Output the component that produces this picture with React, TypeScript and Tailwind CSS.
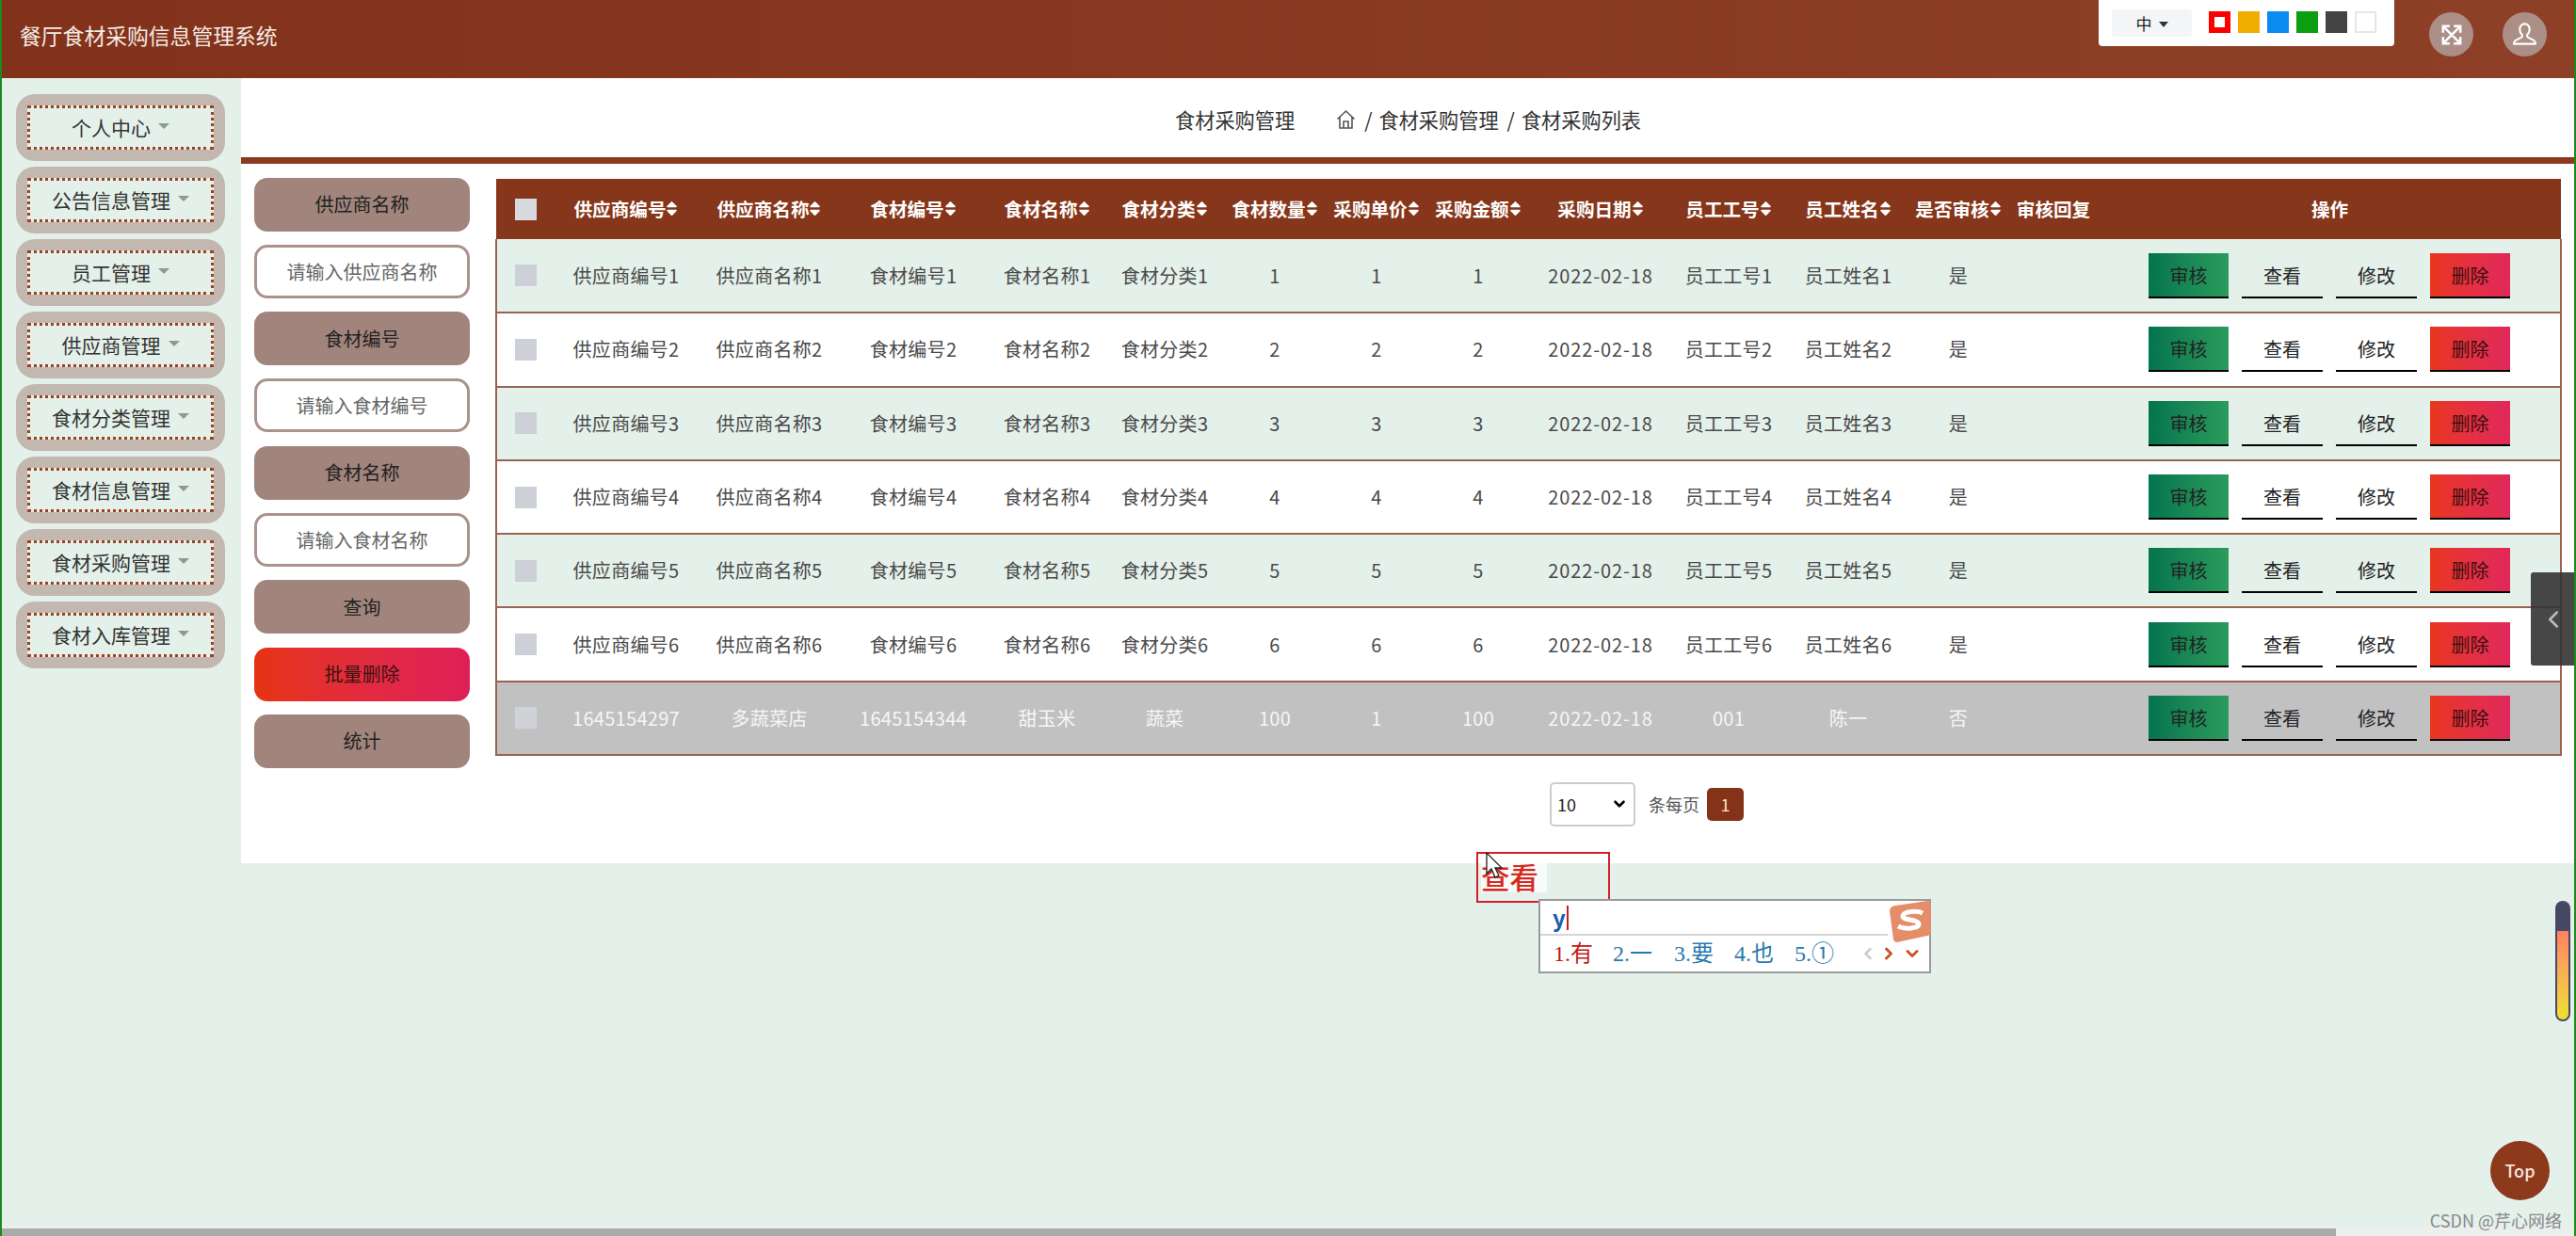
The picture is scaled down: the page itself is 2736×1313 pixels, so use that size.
import React from 'react'
import { ChevronDown, ChevronLeft, ChevronRight } from 'lucide-react'
import { FaSort } from 'react-icons/fa'

const sideMenu = ['个人中心', '公告信息管理', '员工管理', '供应商管理', '食材分类管理', '食材信息管理', '食材采购管理', '食材入库管理']

const columns = [
  { title: '供应商编号', w: 'w-[152px]', sort: true },
  { title: '供应商名称', w: 'w-[152px]', sort: true },
  { title: '食材编号', w: 'w-[154px]', sort: true },
  { title: '食材名称', w: 'w-[130px]', sort: true },
  { title: '食材分类', w: 'w-[120px]', sort: true },
  { title: '食材数量', w: 'w-[114px]', sort: true },
  { title: '采购单价', w: 'w-[102px]', sort: true },
  { title: '采购金额', w: 'w-[114px]', sort: true },
  { title: '采购日期', w: 'w-[146px]', sort: true },
  { title: '员工工号', w: 'w-[126px]', sort: true },
  { title: '员工姓名', w: 'w-[128px]', sort: true },
  { title: '是否审核', w: 'w-[106px]', sort: true },
  { title: '审核回复', w: 'w-[96px]', sort: false },
]

const demoRows = [1, 2, 3, 4, 5, 6].map((n) => [
  `供应商编号${n}`, `供应商名称${n}`, `食材编号${n}`, `食材名称${n}`, `食材分类${n}`,
  `${n}`, `${n}`, `${n}`, '2022-02-18', `员工工号${n}`, `员工姓名${n}`, '是', '',
])
const lastRow = ['1645154297', '多蔬菜店', '1645154344', '甜玉米', '蔬菜', '100', '1', '100', '2022-02-18', '001', '陈一', '否', '']

const SearchLabel = ({ text }: { text: string }) => (
  <div className="flex h-[57px] items-center justify-center rounded-[14px] bg-[#a1847c] text-[20px] text-[#222]">{text}</div>
)

const SearchInput = ({ text }: { text: string }) => (
  <input
    placeholder={text}
    className="h-[57px] w-full rounded-[14px] border-[3px] border-[#ab928c] bg-white text-center text-[20px] outline-none placeholder:text-[#666]"
  />
)

const RowActions = () => (
  <div className="flex items-center justify-center gap-[14px] text-[20px] text-[#222]">
    <button className="h-[48px] w-[85px] border-b-2 border-black bg-gradient-to-r from-[#03744e] to-[#2a9c5c] pt-[2px]">审核</button>
    <button className="h-[48px] w-[86px] border-b-2 border-black pt-[2px]">查看</button>
    <button className="h-[48px] w-[86px] border-b-2 border-black pt-[2px]">修改</button>
    <button className="h-[48px] w-[85px] border-b-2 border-black bg-gradient-to-r from-[#e8361a] to-[#e1285a] pt-[2px] text-[#3a0f0f]">删除</button>
  </div>
)

const App: React.FC = () => {
  return (
    <div className="relative flex h-screen flex-col overflow-hidden border-x-2 border-[#1c8a1c] bg-[#e4f1ea] font-['Noto_Sans_CJK_SC','Liberation_Sans',sans-serif]">
      {/* header */}
      <header className="flex h-[83px] shrink-0 items-center bg-gradient-to-r from-[#82321a] to-[#8e4027] pl-[19px] pr-[29px]">
        <span className="-mt-[7px] text-[22.8px] text-[#f3ebe4]">餐厅食材采购信息管理系统</span>
        <div className="ml-auto flex h-full items-start">
          <div className="flex h-[49px] w-[314px] items-start gap-[8px] rounded-b bg-white pl-[14px] pt-[10px]">
            <div className="mr-[10px] flex h-[29px] w-[85px] items-center justify-center gap-[7px] rounded bg-[#f4f5f6] text-[17px] text-[#222]">
              中
              <span className="mt-[2px] border-x-[5px] border-t-[6px] border-x-transparent border-t-[#333]" />
            </div>
            <span className="mt-[2px] h-[23px] w-[23px] border-[6px] border-[#fb0000] bg-white" />
            <span className="mt-[2px] h-[23px] w-[23px] bg-[#f0ad00]" />
            <span className="mt-[2px] h-[23px] w-[23px] bg-[#0a8cf0]" />
            <span className="mt-[2px] h-[23px] w-[23px] bg-[#0a9e10]" />
            <span className="mt-[2px] h-[23px] w-[23px] bg-[#444]" />
            <span className="mt-[2px] h-[23px] w-[23px] border-2 border-[#e6e6e6] bg-white" />
          </div>
          <div className="ml-[37px] mt-[13px] flex h-[47px] w-[47px] items-center justify-center rounded-full bg-[#ab8f87]">
            <svg width="26" height="26" viewBox="0 0 24 24" fill="none" stroke="white" strokeWidth="2.300">
              <path d="M4 4 20 20M20 4 4 20M3.500 10V3.500H10M14 3.500h6.500V10M20.500 14v6.500H14M10 20.500H3.500V14" />
            </svg>
          </div>
          <div className="ml-[31px] mt-[13px] flex h-[47px] w-[47px] items-center justify-center rounded-full bg-[#ab8f87]">
            <svg width="27" height="27" viewBox="0 0 28 28" fill="none" stroke="white" strokeWidth="2.200" strokeLinejoin="round">
              <path d="M14 2.500c-3.400 0-5.400 2.600-5.400 6 0 2.500 1 4.600 2.600 6v2.200c0 1-5 2.300-7.600 4.300-1 .8-1.500 2-1.500 3.500h23.800c0-1.500-.5-2.700-1.500-3.500-2.600-2-7.600-3.300-7.600-4.300v-2.200c1.600-1.400 2.600-3.500 2.600-6 0-3.400-2-6-5.400-6z" />
            </svg>
          </div>
        </div>
      </header>

      <div className="flex min-h-0 flex-1 items-start">
        {/* side menu */}
        <aside className="flex w-[254px] shrink-0 flex-col gap-[6px] pl-[15px] pt-[17px]">
          {sideMenu.map((item) => (
            <div key={item} className="h-[71px] w-[222px] rounded-[20px] bg-[#c3b8b0] p-[12px]">
              <div className="flex h-[47px] items-center justify-center gap-[8px] border-[3px] border-dotted border-[#a0401f] bg-[#e4f1ea] text-[21px] text-[#333]">
                {item}
                <span className="mb-[4px] border-x-[6px] border-t-[6px] border-x-transparent border-t-[#8b9a95]" />
              </div>
            </div>
          ))}
        </aside>

        <main className="h-[834px] min-w-0 flex-1 bg-white">
          {/* breadcrumb */}
          <div className="flex h-[84px] items-center pl-[992px] pt-[3px] text-[21.200px] text-[#333]">
            <span>食材采购管理</span>
            <svg className="ml-[44px]" width="21" height="22" viewBox="0 0 21 22" fill="none" stroke="#555" strokeWidth="1.600">
              <path d="M1.500 10.500 10.500 2l9 8.500M4 8.500V20h13V8.500M8 20v-7h5v7" />
            </svg>
            <span className="ml-[9px]">/</span>
            <span className="ml-[7px]">食材采购管理</span>
            <span className="ml-[9px]">/</span>
            <span className="ml-[7px]">食材采购列表</span>
          </div>
          <div className="h-[7px] bg-[#8b3a20]" />

          <div className="flex items-start pl-[14px] pt-[14.500px]">
            {/* search column */}
            <div className="flex w-[229px] shrink-0 flex-col gap-[14.300px]">
              <SearchLabel text="供应商名称" />
              <SearchInput text="请输入供应商名称" />
              <SearchLabel text="食材编号" />
              <SearchInput text="请输入食材编号" />
              <SearchLabel text="食材名称" />
              <SearchInput text="请输入食材名称" />
              <SearchLabel text="查询" />
              <div className="flex h-[57px] items-center justify-center rounded-[14px] bg-gradient-to-r from-[#e5340f] to-[#df1f58] text-[20px] text-[#3a1212]">批量删除</div>
              <SearchLabel text="统计" />
            </div>

            <div className="ml-[27px] mt-[1.500px] w-[2195px] shrink-0">
              <table className="w-full table-fixed border-collapse text-center text-[20px] tracking-[0.3px] text-[#4a4a4a]">
                <colgroup>
                  <col className="w-[62px]" />
                  {columns.map((c) => <col key={c.title} className={c.w} />)}
                  <col />
                </colgroup>
                <thead>
                  <tr className="h-[64px] bg-[#86361b] text-white">
                    <th><span className="mx-auto block h-[23px] w-[23px] bg-[#d8dae0]" /></th>
                    {columns.map((c) => (
                      <th key={c.title} className="whitespace-nowrap text-[19.600px] font-bold tracking-normal">
                        <span className="inline-flex items-center justify-center">
                          {c.title}
                          {c.sort && <FaSort size={19} className="-mx-[3px]" />}
                        </span>
                      </th>
                    ))}
                    <th className="text-[19.600px] font-bold tracking-normal">操作</th>
                  </tr>
                </thead>
                <tbody>
                  {demoRows.map((row, i) => (
                    <tr key={i} className={`h-[78.300px] border-x-2 border-b-2 border-[#9a6350] ${i % 2 === 0 ? 'bg-[#e4f0ea]' : 'bg-white'}`}>
                      <td><span className="mx-auto block h-[23px] w-[23px] bg-[#cdd0d6]" /></td>
                      {row.map((cell, j) => (
                        <td key={j} className={`whitespace-nowrap ${j === 8 ? 'tracking-[0.9px]' : ''}`}>{cell}</td>
                      ))}
                      <td className="tracking-normal"><RowActions /></td>
                    </tr>
                  ))}
                  <tr className="h-[78.300px] border-x-2 border-b-2 border-[#9a6350] bg-[#c1c1c1] text-[#f6f6f6]">
                    <td><span className="mx-auto block h-[23px] w-[23px] bg-[#cfd3d7]" /></td>
                    {lastRow.map((cell, j) => (
                      <td key={j} className={`whitespace-nowrap ${j === 8 ? 'tracking-[0.9px]' : ''}`}>{cell}</td>
                    ))}
                    <td className="tracking-normal"><RowActions /></td>
                  </tr>
                </tbody>
              </table>

              {/* pagination */}
              <div className="mt-[27.500px] flex items-center pl-[1120px] text-[18px] text-[#555]">
                <div className="flex h-[47px] w-[91px] items-center justify-between rounded-[5px] border-2 border-[#ccc] px-[6px] text-[#222]">
                  10
                  <ChevronDown size={18} strokeWidth={3.500} className="text-black" />
                </div>
                <span className="ml-[14px]">条每页</span>
                <span className="ml-[8px] flex h-[35px] w-[39px] items-center justify-center rounded-[5px] bg-[#843318] text-[#f5e6c8]">1</span>
              </div>
            </div>
          </div>
        </main>
      </div>

      {/* bottom scrollbar */}
      <div className="flex h-[10px] shrink-0 items-end bg-[#ebefed]">
        <div className="h-[8px] w-[2479px] bg-[#aaa]" />
      </div>

      {/* right drawer handle */}
      <div className="absolute right-[-2px] top-[608px] flex h-[99px] w-[48px] items-center justify-center rounded-l-[3px] bg-[#333]/90">
        <ChevronLeft size={30} strokeWidth={2} className="text-[#bbb]" />
      </div>

      {/* gauge */}
      <div className="absolute right-[4px] top-[957px] flex h-[128px] w-[16px] flex-col justify-end overflow-hidden rounded-full bg-[#474864] px-[2px] pb-[2px]">
        <div className="h-[94px] rounded-b-full bg-gradient-to-b from-[#ff8060] to-[#eee030]" />
      </div>

      {/* back to top */}
      <div className="absolute left-[2643px] top-[1212px] flex h-[63px] w-[63px] items-center justify-center rounded-full bg-[#8d3a1c] text-[18px] font-medium text-[#f4e8e0]">
        Top
      </div>

      <div className="absolute right-[13px] top-[1283px] text-[18px] text-[#888]">CSDN @芹心网络</div>

      {/* text being typed */}
      <div className="absolute left-[1566px] top-[905px] h-[54px] w-[142px] border-2 border-[#d3202a]">
        <span className="absolute left-[3px] top-[7px] bg-white/70 pr-[9px] text-[30.500px] font-medium leading-[34px] text-[#d8281e]">查看</span>
      </div>
      <svg className="absolute left-[1576px] top-[905px]" width="22" height="30" viewBox="0 0 22 30">
        <path d="M1 1v22l5-5 4 9 4-2-4-8h7z" fill="white" stroke="#222" strokeWidth="1.300" />
      </svg>

      {/* input method box */}
      <div className="absolute left-[1632px] top-[955px] h-[79px] w-[417px] border-2 border-[#9a9a9a] bg-white">
        <div className="mr-[44px] flex h-[37px] items-center border-b-2 border-[#d5d5d5] pl-[13px] text-[24px] font-bold leading-none text-[#1a5cb0]">
          y<span className="ml-[1px] h-[26px] w-[2px] bg-[#c02020]" />
        </div>
        <div className="flex h-[38px] items-center pl-[14px] font-['Liberation_Serif','Noto_Sans_CJK_SC',serif] text-[24px] text-[#2a78b0]">
          <span className="w-[63px] text-[#c01818]">1.有</span>
          <span className="w-[65px]">2.一</span>
          <span className="w-[64px]">3.要</span>
          <span className="w-[64px]">4.也</span>
          <span className="w-[68px]">5.①</span>
          <ChevronLeft size={20} strokeWidth={3} className="text-[#ccc]" />
          <ChevronRight size={20} strokeWidth={3.500} className="ml-[2px] text-[#c8552a]" />
          <ChevronDown size={20} strokeWidth={3.500} className="ml-[5px] text-[#c8552a]" />
        </div>
        <svg className="absolute right-[-2px] top-[-1px]" width="46" height="46" viewBox="0 0 46 46">
          <path d="M8 6 42 1q4 0 4 5v28q0 3-4 4L10 45q-3 0-4-3L2 12q0-5 6-6z" fill="#e58c69" />
          <path d="M37 14c-6-3-20-2-21 3-1 5 17 3 17 9 0 4-14 6-22 2" fill="none" stroke="white" strokeWidth="5" />
        </svg>
      </div>
    </div>
  )
}

export default App
